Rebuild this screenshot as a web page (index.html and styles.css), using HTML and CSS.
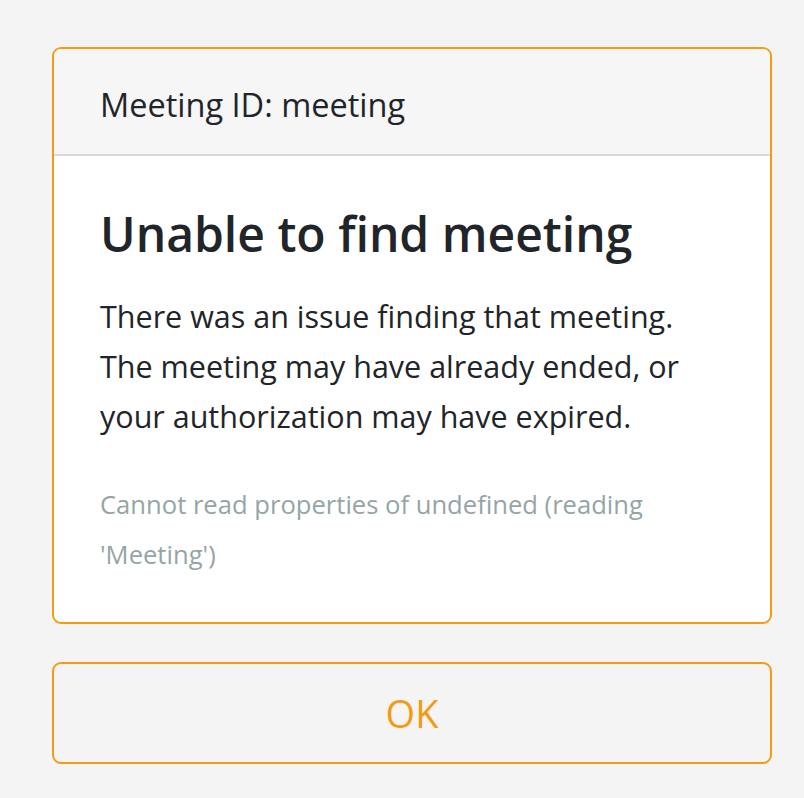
FILE: index.html
```html
<!DOCTYPE html>
<html lang="en">
<head>
<meta charset="utf-8">
<title>Meeting</title>
<link rel="stylesheet" href="styles.css">
</head>
<body>
<main class="page">
  <section class="card">
    <header class="card-header">Meeting ID: meeting</header>
    <div class="card-body">
      <h2 class="title">Unable to find meeting</h2>
      <p class="message">There was an issue finding that meeting. The meeting may have already ended, or your authorization may have expired.</p>
      <p class="error">Cannot read properties of undefined (reading 'Meeting')</p>
    </div>
  </section>
  <button class="ok-button" type="button">OK</button>
</main>
</body>
</html>
```

FILE: styles.css
```css
html, body {
  margin: 0;
  padding: 0;
}
body {
  background: #f4f4f4;
  font-family: "Open Sans", "Noto Sans", sans-serif;
  color: #212529;
}
.page {
  padding: 47px 32px 0 52px;
  display: flex;
  flex-direction: column;
}
.card {
  border: 2px solid #f39c12;
  border-radius: 9px;
  background: #fff;
  overflow: hidden;
}
.card-header {
  background: #f6f6f6;
  border-bottom: 2px solid #d9d9d9;
  height: 107px;
  box-sizing: border-box;
  padding: 6px 46px 0;
  display: flex;
  align-items: center;
  font-size: 32.5px;
  line-height: 40px;
}
.card-body {
  padding: 49px 46px 42px;
}
.title {
  margin: 0;
  font-size: 48px;
  line-height: 58px;
  font-weight: 600;
}
.message {
  margin: 28px 0 0;
  max-width: 612px;
  font-size: 30.5px;
  line-height: 50px;
}
.error {
  margin: 39px 0 0;
  font-size: 25.6px;
  line-height: 50px;
  color: #95a5a6;
}
.ok-button {
  margin-top: 38px;
  height: 102px;
  border: 2px solid #f39c12;
  border-radius: 9px;
  background: transparent;
  color: #f39c12;
  font-family: inherit;
  font-size: 38px;
  padding: 0;
}
```
